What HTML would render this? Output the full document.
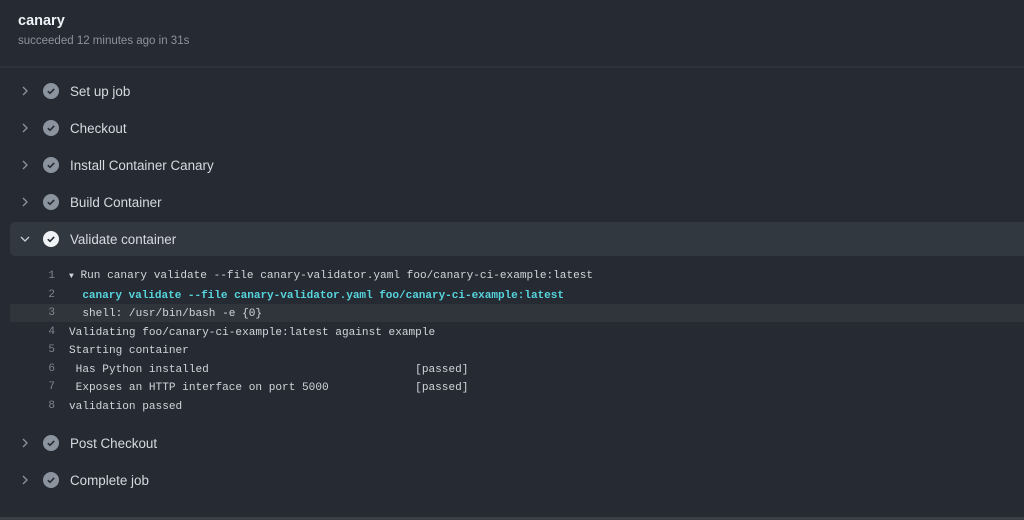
<!DOCTYPE html>
<html><head><meta charset="utf-8"><style>
*{margin:0;padding:0;box-sizing:border-box}
body{width:1024px;height:520px;background:#262a32;font-family:"Liberation Sans",sans-serif;color:#c9d1d9;position:relative;overflow:hidden}
.a{position:absolute}
.title{left:18px;top:13px;font-size:14.5px;font-weight:bold;color:#f0f3f6}
.sub{left:18px;top:35px;font-size:11.5px;color:#8b949e}
.hr{left:0;top:66px;width:1024px;height:2px;background:#2e333b}
.step{position:absolute;left:0;width:1024px;height:34px}
.step .t{position:absolute;left:70px;top:10px;font-size:13.4px;color:#d5dbe1}
.step svg{position:absolute}
.sel{background:#323840;left:10px;width:1014px;border-radius:5px 0 0 5px}
.log{position:absolute;font-family:"Liberation Mono",monospace;font-size:11.1px;color:#d0d6dc;white-space:pre;line-height:18.5px}
.num{position:absolute;width:30px;text-align:right;color:#7d8590;font-family:"Liberation Mono",monospace;font-size:11.1px}
.hl{position:absolute;left:10px;top:304px;width:1014px;height:18px;background:#30353c}
.cy{color:#56d4dd;font-weight:bold;letter-spacing:-0.06px}
.bot{left:0;top:517px;width:1024px;height:3px;background:#3a3f46}
</style></head><body>
<div class="a title">canary</div>
<div class="a sub">succeeded 12 minutes ago in 31s</div>
<div class="a hr"></div>

<div class="step" style="top:74px"><svg style="left:20px;top:12px" width="10" height="10" viewBox="0 0 10 10"><path d="M3 1l4 4-4 4" stroke="#8b949e" stroke-width="1.3" fill="none"/></svg><svg style="left:43px;top:9px" width="16" height="16"><circle cx="8" cy="8" r="8" fill="#8b949e"/><path d="M4.8 8.2l2.2 2.1 4.2-4.4" stroke="#262a32" stroke-width="1.6" fill="none"/></svg><span class="t">Set up job</span></div>
<div class="step" style="top:111px"><svg style="left:20px;top:12px" width="10" height="10" viewBox="0 0 10 10"><path d="M3 1l4 4-4 4" stroke="#8b949e" stroke-width="1.3" fill="none"/></svg><svg style="left:43px;top:9px" width="16" height="16"><circle cx="8" cy="8" r="8" fill="#8b949e"/><path d="M4.8 8.2l2.2 2.1 4.2-4.4" stroke="#262a32" stroke-width="1.6" fill="none"/></svg><span class="t">Checkout</span></div>
<div class="step" style="top:148px"><svg style="left:20px;top:12px" width="10" height="10" viewBox="0 0 10 10"><path d="M3 1l4 4-4 4" stroke="#8b949e" stroke-width="1.3" fill="none"/></svg><svg style="left:43px;top:9px" width="16" height="16"><circle cx="8" cy="8" r="8" fill="#8b949e"/><path d="M4.8 8.2l2.2 2.1 4.2-4.4" stroke="#262a32" stroke-width="1.6" fill="none"/></svg><span class="t">Install Container Canary</span></div>
<div class="step" style="top:185px"><svg style="left:20px;top:12px" width="10" height="10" viewBox="0 0 10 10"><path d="M3 1l4 4-4 4" stroke="#8b949e" stroke-width="1.3" fill="none"/></svg><svg style="left:43px;top:9px" width="16" height="16"><circle cx="8" cy="8" r="8" fill="#8b949e"/><path d="M4.8 8.2l2.2 2.1 4.2-4.4" stroke="#262a32" stroke-width="1.6" fill="none"/></svg><span class="t">Build Container</span></div>
<div class="step sel" style="top:222px"><svg style="left:10px;top:12px" width="10" height="10" viewBox="0 0 10 10"><path d="M1 3l4 4 4-4" stroke="#c9d1d9" stroke-width="1.3" fill="none"/></svg><svg style="left:33px;top:9px" width="16" height="16"><circle cx="8" cy="8" r="8" fill="#f0f3f6"/><path d="M4.8 8.2l2.2 2.1 4.2-4.4" stroke="#262a32" stroke-width="1.6" fill="none"/></svg><span class="t" style="left:60px">Validate container</span></div>

<div class="hl"></div>
<div class="num" style="left:25px;top:267px;line-height:18.5px">1<br>2<br>3<br>4<br>5<br>6<br>7<br>8</div>
<div class="log" style="left:69px;top:267px"><span style="font-size:8px">▼</span> Run canary validate --file canary-validator.yaml foo/canary-ci-example:latest
  <span class="cy">canary validate --file canary-validator.yaml foo/canary-ci-example:latest</span>
  shell: /usr/bin/bash -e {0}
Validating foo/canary-ci-example:latest against example
Starting container
 Has Python installed                               [passed]
 Exposes an HTTP interface on port 5000             [passed]
validation passed</div>

<div class="step" style="top:426px"><svg style="left:20px;top:12px" width="10" height="10" viewBox="0 0 10 10"><path d="M3 1l4 4-4 4" stroke="#8b949e" stroke-width="1.3" fill="none"/></svg><svg style="left:43px;top:9px" width="16" height="16"><circle cx="8" cy="8" r="8" fill="#8b949e"/><path d="M4.8 8.2l2.2 2.1 4.2-4.4" stroke="#262a32" stroke-width="1.6" fill="none"/></svg><span class="t">Post Checkout</span></div>
<div class="step" style="top:463px"><svg style="left:20px;top:12px" width="10" height="10" viewBox="0 0 10 10"><path d="M3 1l4 4-4 4" stroke="#8b949e" stroke-width="1.3" fill="none"/></svg><svg style="left:43px;top:9px" width="16" height="16"><circle cx="8" cy="8" r="8" fill="#8b949e"/><path d="M4.8 8.2l2.2 2.1 4.2-4.4" stroke="#262a32" stroke-width="1.6" fill="none"/></svg><span class="t">Complete job</span></div>
<div class="a bot"></div>
</body></html>
